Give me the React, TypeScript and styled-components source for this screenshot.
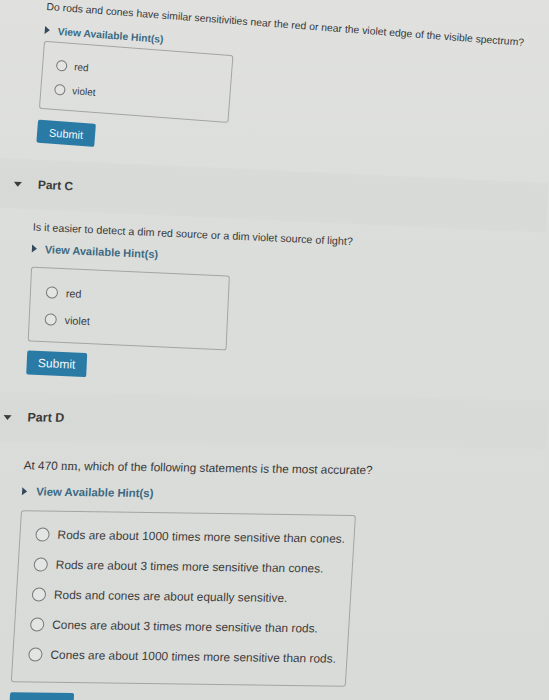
import React from "react";
import styled, { createGlobalStyle } from "styled-components";

const Global = createGlobalStyle`
  html, body { margin: 0; padding: 0; }
  body {
    background: #dadcda;
    font-family: "Liberation Sans", Arial, sans-serif;
    color: #3a3a3a;
    overflow: hidden;
  }
  #root { width: 549px; height: 700px; overflow: hidden; }
`;

const Page = styled.div`
  width: 549px;
  height: 700px;
  overflow: hidden;
  background: linear-gradient(180deg, #e0e1df 0%, #dbdddb 40%, #d9dbd9 100%);
  padding-top: 1px;
  box-sizing: border-box;
`;

const Section = styled.section<{ $rot: number; $skew?: number; $ml?: number; $mt?: number }>`
  margin-left: ${(p) => p.$ml ?? 0}px;
  margin-top: ${(p) => p.$mt ?? 0}px;
  transform-origin: 0 0;
  transform: rotate(${(p) => p.$rot}deg) skewX(${(p) => p.$skew ?? 0}deg);
`;

const Inner = styled.div<{ $pl: number }>`
  padding-left: ${(p) => p.$pl}px;
`;

const PartHeader = styled.div<{ $pl: number; $size: number; $gap: number }>`
  height: 50px;
  display: flex;
  align-items: center;
  gap: ${(p) => p.$gap}px;
  padding-left: ${(p) => p.$pl}px;
  background: linear-gradient(180deg, #d9dbd9 0%, #d7d9d7 60%, #d9dbd9 100%);
  font-weight: bold;
  font-size: ${(p) => p.$size}px;
  color: #3a3a3a;
`;

const DownTri = styled.span`
  width: 0;
  height: 0;
  border-left: 4px solid transparent;
  border-right: 4px solid transparent;
  border-top: 5px solid #3c3c3c;
`;

const Question = styled.div<{ $size: number; $lh: number; $mt: number }>`
  font-size: ${(p) => p.$size}px;
  line-height: ${(p) => p.$lh}px;
  margin-top: ${(p) => p.$mt}px;
  white-space: nowrap;
  color: #383838;
`;

const MathUnit = styled.span`
  font-family: "Liberation Serif", "Times New Roman", serif;
  font-size: 1.1em;
`;

const Hint = styled.div<{ $size: number; $lh: number; $mt: number; $gap: number }>`
  display: flex;
  align-items: center;
  gap: ${(p) => p.$gap}px;
  margin-top: ${(p) => p.$mt}px;
  height: ${(p) => p.$lh}px;
  font-size: ${(p) => p.$size}px;
  font-weight: bold;
  color: #3b6a82;
  white-space: nowrap;
`;

const RightTri = styled.span`
  width: 0;
  height: 0;
  border-top: 4px solid transparent;
  border-bottom: 4px solid transparent;
  border-left: 5px solid #34495a;
`;

const AnswerBox = styled.div<{ $w: number; $h: number; $mt: number; $pt: number; $pl: number }>`
  width: ${(p) => p.$w}px;
  height: ${(p) => p.$h}px;
  margin-top: ${(p) => p.$mt}px;
  box-sizing: border-box;
  border: 1px solid #a3a5a4;
  border-radius: 3px;
  padding-top: ${(p) => p.$pt}px;
  padding-left: ${(p) => p.$pl}px;
  display: flex;
  flex-direction: column;
`;

const Option = styled.label<{ $h: number; $size: number; $gap: number }>`
  display: flex;
  align-items: center;
  gap: ${(p) => p.$gap}px;
  height: ${(p) => p.$h}px;
  font-size: ${(p) => p.$size}px;
  color: #3c3c3c;
  white-space: nowrap;
`;

const Radio = styled.span<{ $d: number }>`
  width: ${(p) => p.$d}px;
  height: ${(p) => p.$d}px;
  box-sizing: border-box;
  border-radius: 50%;
  border: 1.3px solid #777978;
  background: #e3e4e3;
  flex: none;
`;

const Submit = styled.button<{ $w: number; $h: number; $mt: number; $size: number }>`
  display: block;
  width: ${(p) => p.$w}px;
  height: ${(p) => p.$h}px;
  margin-top: ${(p) => p.$mt}px;
  padding: 0;
  border: none;
  border-radius: 2px;
  background: #2a7aa6;
  color: #f4f8fa;
  font-family: "Liberation Sans", Arial, sans-serif;
  font-size: ${(p) => p.$size}px;
`;

function Options({ items, row, size, d, gap }: { items: string[]; row: number; size: number; d: number; gap: number }) {
  return (
    <>
      {items.map((t) => (
        <Option key={t} $h={row} $size={size} $gap={gap}>
          <Radio $d={d} />
          {t}
        </Option>
      ))}
    </>
  );
}

export default function App() {
  return (
    <>
      <Global />
      <Page>
        <Section $rot={4.3} $ml={47}>
          <Question $size={10.4} $lh={12} $mt={0}>
            Do rods and cones have similar sensitivities near the red or near the violet edge of the visible spectrum?
          </Question>
          <Hint $size={10.3} $lh={12} $mt={11} $gap={8}>
            <RightTri />
            View Available Hint(s)
          </Hint>
          <AnswerBox $w={190} $h={68} $mt={5} $pt={10} $pl={13}>
            <Options items={["red", "violet"]} row={24} size={10} d={11} gap={7} />
          </AnswerBox>
          <Submit $w={58} $h={23} $mt={11} $size={11}>
            Submit
          </Submit>
        </Section>

        <Section $rot={2.6} $mt={15}>
          <PartHeader $pl={15} $size={12} $gap={16}>
            <DownTri />
            Part C
          </PartHeader>
          <Inner $pl={36}>
            <Question $size={10.7} $lh={13} $mt={11}>
              Is it easier to detect a dim red source or a dim violet source of light?
            </Question>
            <Hint $size={11} $lh={13} $mt={8} $gap={8}>
              <RightTri />
              View Available Hint(s)
            </Hint>
            <AnswerBox $w={199} $h={75} $mt={12} $pt={10} $pl={15}>
              <Options items={["red", "violet"]} row={27} size={10.8} d={12} gap={8} />
            </AnswerBox>
            <Submit $w={60} $h={24} $mt={9} $size={12}>
              Submit
            </Submit>
          </Inner>
        </Section>

        <Section $rot={0.8} $skew={-2.6} $mt={19}>
          <PartHeader $pl={5} $size={12.5} $gap={16}>
            <DownTri />
            Part D
          </PartHeader>
          <Inner $pl={28}>
            <Question $size={11.8} $lh={14} $mt={16}>
              At 470 <MathUnit>nm</MathUnit>, which of the following statements is the most accurate?
            </Question>
            <Hint $size={11.4} $lh={14} $mt={12} $gap={9}>
              <RightTri />
              View Available Hint(s)
            </Hint>
            <AnswerBox $w={335} $h={172} $mt={12} $pt={8} $pl={15}>
              <Options
                items={[
                  "Rods are about 1000 times more sensitive than cones.",
                  "Rods are about 3 times more sensitive than cones.",
                  "Rods and cones are about equally sensitive.",
                  "Cones are about 3 times more sensitive than rods.",
                  "Cones are about 1000 times more sensitive than rods.",
                ]}
                row={30}
                size={11.9}
                d={14}
                gap={8}
              />
            </AnswerBox>
            <Submit $w={64} $h={26} $mt={10} $size={12}>
              Submit
            </Submit>
          </Inner>
        </Section>
      </Page>
    </>
  );
}
